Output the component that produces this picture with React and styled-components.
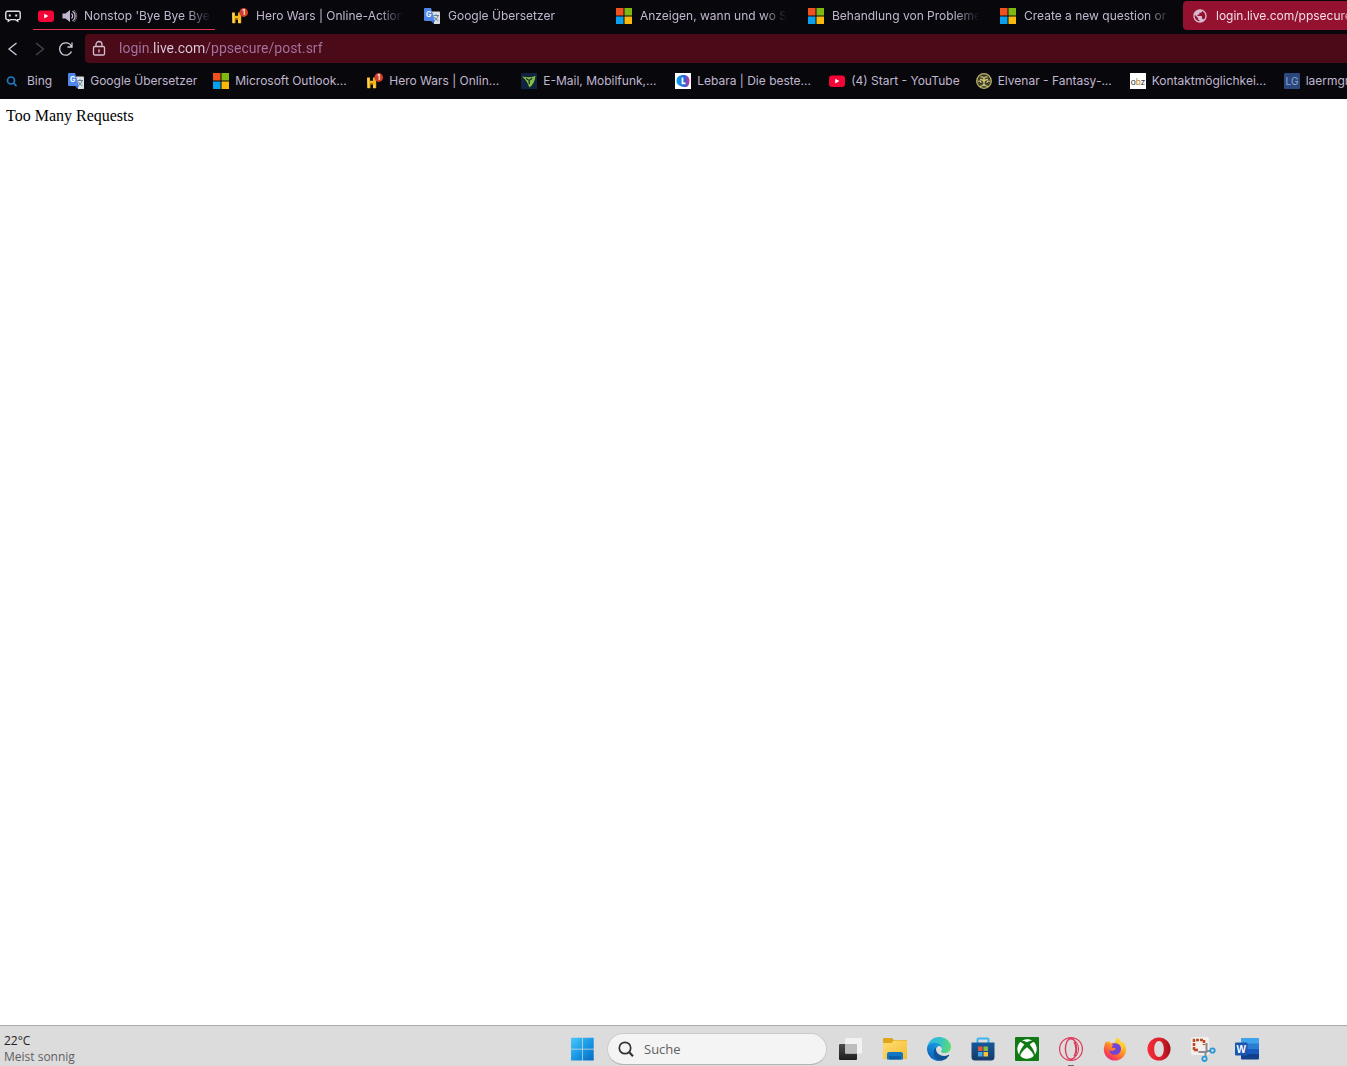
import React from 'react';
import styled, { createGlobalStyle, css } from 'styled-components';
import { MdPublic } from 'react-icons/md';
import { FaXbox } from 'react-icons/fa';

const GlobalStyle = createGlobalStyle`
  * {
    box-sizing: border-box;
  }

  body {
    margin: 0;
    background: #fff;
  }
`;

const Screen = styled.div`
  display: flex;
  flex-direction: column;
  min-height: 100vh;
  overflow: hidden;
`;

const Browser = styled.header`
  background: #08070c;
  color: #c0b7cf;
  font-family: Inter, 'Liberation Sans', sans-serif;
  font-size: 12px;
  overflow: hidden;
`;

const IconButton = styled.button`
  display: flex;
  flex: none;
  align-items: center;
  justify-content: center;
  width: 26px;
  height: 29px;
  padding: 0;
  border: 0;
  background: none;
  color: ${props => props.$dim ? '#4a4650' : '#d3cbdc'};
`;

const TabRow = styled.nav`
  display: flex;
  gap: 8px;
  height: 34px;
  padding: 1px 0 4px;
`;

const Tab = styled.button`
  display: flex;
  flex: none;
  align-items: center;
  gap: 8px;
  width: 184px;
  height: 29px;
  padding: 0 4px 0 9px;
  border: 0;
  border-radius: 4px;
  background: ${props => props.$active ? '#94112f' : 'none'};
  color: ${props => props.$active ? '#f1dfe9' : 'inherit'};
  font: inherit;
  line-height: 16px;
  text-align: left;

  ${props => props.$playing && css`
    width: 182px;
    margin-left: -1px;
    padding-left: 5px;
    border-radius: 0;
    box-shadow: inset 0 -1px #e23350;
  `}
`;

const TabTitle = styled.span`
  flex: 1;
  overflow: hidden;
  white-space: nowrap;
  mask-image: linear-gradient(to left, transparent, #000 24px);
`;

const AddressRow = styled.div`
  display: flex;
  height: 29px;
`;

const AddressBar = styled.label`
  display: flex;
  flex: 1;
  align-items: center;
  gap: 12px;
  margin-left: 7px;
  padding: 0 0 1px 6px;
  border-radius: 4px 0 0 4px;
  background: #4b0a17;
  color: #d3bfd0;
`;

// the host name is brighter than the rest of the url
const AddressInput = styled.input`
  flex: 1;
  min-width: 0;
  height: 20px;
  padding: 0;
  border: 0;
  outline: 0;
  background: linear-gradient(to right, #a374a0 33px, #dccbe0 33px, #dccbe0 86px, #a374a0 86px);
  background-clip: text;
  color: transparent;
  font: 14px/20px Roboto, sans-serif;
`;

const BookmarkRow = styled.nav`
  display: flex;
  align-items: center;
  gap: 16px;
  height: 36px;
  padding-left: 5px;
`;

const Bookmark = styled.a`
  display: flex;
  flex: none;
  align-items: center;
  gap: 6px;
  width: ${props => props.$long ? '138px' : 'auto'};
  color: inherit;
  line-height: 18px;
  text-decoration: none;
  white-space: nowrap;
`;

const Page = styled.main`
  flex: 1;
  padding: 8px 6px;
  color: #000;
  font: 16px/18px 'Liberation Serif', serif;
`;

const Taskbar = styled.footer`
  display: flex;
  align-items: center;
  padding: 7px 78px 1px 4px;
  border-top: 1px solid #aaa;
  background: #dcdcdc;
  font-family: 'Open Sans', 'Noto Sans', sans-serif;
`;

const Weather = styled.div`
  flex: 1;
  color: #606060;
  font-size: 12px;
  line-height: 16px;
`;

const Temperature = styled.div`
  color: #222;
`;

const TaskButton = styled.button`
  position: relative;
  display: flex;
  flex: none;
  align-items: center;
  justify-content: center;
  width: 44px;
  height: 32px;
  padding: 0;
  border: 0;
  background: none;
`;

const RunningMark = styled.span`
  position: absolute;
  bottom: -1px;
  left: 19px;
  width: 6px;
  height: 1px;
  background: #666;
`;

const SearchBox = styled.label`
  display: flex;
  flex: none;
  align-items: center;
  gap: 10px;
  width: 220px;
  height: 32px;
  margin: 0 2px 0 3px;
  padding-left: 10px;
  border: 1px solid #cbcbcb;
  border-bottom-color: #b4b4b4;
  border-radius: 16px;
  background: #f4f4f4;
`;

const SearchInput = styled.input`
  flex: 1;
  min-width: 0;
  padding: 0;
  border: 0;
  outline: 0;
  background: none;
  font: 13px/18px 'Open Sans', 'Noto Sans', sans-serif;

  &::placeholder {
    color: #606060;
    opacity: 1;
  }
`;

const Icon = styled.svg`
  display: block;
  flex: none;
  width: ${props => props.$size || 16}px;
  height: ${props => props.$size || 16}px;
  overflow: visible;
`;

const YouTubeIcon = () => (
  <Icon viewBox="0 0 16 16">
    <rect y="2.5" width="16" height="11.5" rx="3" fill="#f50537" />
    <path d="M6.2 5.8v4.6l4.2-2.3z" fill="#fff" />
  </Icon>
);

const HeroIcon = () => (
  <Icon viewBox="0 0 16 16">
    <path d="M0 4.500h3v3.300h3V4.500h3.200v10.800H6v-3.300H3.400v3.300H.5z" fill="#f2b91c" />
    <path d="M.5 5v10h1.200V5zM6.500 12v3h1.200v-3z" fill="#ffe060" />
    <path d="M3 10.300h3V12H3z" fill="#9c5a0c" />
    <circle cx="11.700" cy="4.500" r="4.400" fill="#cf3d2b" />
    <text x="11.700" y="7.200" fontSize="7" fontWeight="bold" textAnchor="middle" fill="#ffe9df">1</text>
  </Icon>
);

const TranslateIcon = () => (
  <Icon viewBox="0 0 16 16">
    <path d="M6 3.500h9.200a.8.8 0 0 1 .8.8v10.900a.8.8 0 0 1-.8.8H10z" fill="#d9dfe2" />
    <path d="M9.500 7.500h5.500M12 6.300v1.200M14 7.500c-.5 2.500-2 4-3.500 5M10.500 9c.8 1.600 2.200 3 4 3.800" fill="none" stroke="#66818d" strokeWidth="1" />
    <path d="M7 13h3.800L9 15.500z" fill="#2f5fc0" />
    <path d="M1 0h6l4 13H1a1 1 0 0 1-1-1V1a1 1 0 0 1 1-1z" fill="#4f86ea" />
    <text x="4.600" y="8.800" fontSize="7" fontWeight="bold" textAnchor="middle" fill="#fff">G</text>
  </Icon>
);

const MicrosoftIcon = () => (
  <Icon viewBox="0 0 16 16">
    <path d="M0 0h7.500v7.500H0z" fill="#f1511b" />
    <path d="M8.500 0H16v7.500H8.500z" fill="#80b812" />
    <path d="M0 8.500h7.500V16H0z" fill="#08a1ec" />
    <path d="M8.500 8.500H16V16H8.500z" fill="#fbb90b" />
  </Icon>
);

const BingIcon = () => (
  <Icon viewBox="0 0 16 16" fill="none" stroke="#1b7fc4" strokeWidth="1.700">
    <circle cx="6" cy="7.500" r="3.500" />
    <path d="M8.500 10l3 3.200" />
  </Icon>
);

const MailIcon = () => (
  <Icon viewBox="0 0 16 16">
    <path d="M0 0h16v16H0z" fill="#10243f" />
    <path d="M1 3.500c4.500 1.200 9.500 1 13.500-.8C14 8 12 12 8.300 14.500 7 10 4.500 6 1 3.500z" fill="#86bd3b" />
    <path d="M5 5.600l3.200 1.800 3-2.200M8.100 7.400l.2 3.600" stroke="#10243f" strokeWidth="1.200" fill="none" />
  </Icon>
);

const LebaraIcon = () => (
  <Icon viewBox="0 0 16 16">
    <defs>
      <linearGradient id="lebara">
        <stop offset="0" stopColor="#06a5e2" />
        <stop offset=".6" stopColor="#2465da" />
        <stop offset="1" stopColor="#d92d9b" />
      </linearGradient>
    </defs>
    <path d="M0 0h16v16H0z" fill="#fff" />
    <path d="M1.500 8C1.500 4 4.500 2 8.500 2s6 2.500 6 6-1.500 5.500-3 6C6 14 1.500 12 1.500 8z" fill="url(#lebara)" />
    <path d="M7.500 4.500v5.800h3" fill="none" stroke="#fff" strokeWidth="1.800" />
  </Icon>
);

const TreeIcon = () => (
  <Icon viewBox="0 0 16 16">
    <circle cx="8" cy="8" r="7.300" fill="#3c4229" stroke="#bfb16c" strokeWidth="1.300" />
    <path d="M8 5v8M4 6.500c2 0 4 .5 4 3.500 0-3 2-3.500 4-3.500M4.500 4C7 3.500 8 5 8 7c0-2 1-3.500 3.500-3M8 11c-1 2-2 2.500-4 2.500M8 11c1 2 2 2.500 4 2.500M2 8.500c2-1 3 0 3 1.500M14 8.500c-2-1-3 0-3 1.500" fill="none" stroke="#cabd75" strokeWidth="1.300" />
  </Icon>
);

const ObzIcon = () => (
  <Icon viewBox="0 0 16 16">
    <path d="M0 0h16v16H0z" fill="#fff" />
    <text x="8" y="11.500" fontSize="9" textAnchor="middle" fontFamily="Liberation Sans" fill="#333">
      o<tspan fill="#b9812c">b</tspan>z
    </text>
  </Icon>
);

const LgIcon = () => (
  <Icon viewBox="0 0 16 16">
    <rect width="16" height="16" rx="1" fill="#2c477c" />
    <text x="8" y="11.500" fontSize="10" textAnchor="middle" fill="#8ba9d4">LG</text>
  </Icon>
);

const SpeakerIcon = () => (
  <Icon viewBox="0 0 14 14" $size={14}>
    <path d="M.5 4.500h3L8 1v12L3.500 9.500h-3z" fill="#c0b7cf" />
    <path d="M9.500 4.500c1.400 1.500 1.400 3.500 0 5M10.500 2c3.500 2.500 3.500 7.500 0 10" fill="none" stroke="#c0b7cf" strokeWidth="1.300" />
    <path d="M12 1c3.500 3.500 3.500 8.500 0 12" fill="none" stroke="#77717f" strokeWidth="1" />
  </Icon>
);

const WorkspaceIcon = () => (
  <Icon viewBox="0 0 16 16" fill="none" stroke="#e4deea" strokeWidth="1.400">
    <path d="M2.500 3.200h11a1.700 1.700 0 0 1 1.700 1.700v5a1.700 1.700 0 0 1-1.700 1.700h-.8v1.600L10.500 11.600h-5l-2.200 1.600v-1.600h-.8a1.700 1.700 0 0 1-1.700-1.700v-5a1.700 1.700 0 0 1 1.700-1.700z" />
    <path d="M3.800 7.500h2M10.200 7.500h2" strokeWidth="2" />
  </Icon>
);

const BackIcon = () => (
  <Icon viewBox="0 0 16 16" fill="none" stroke="currentColor" strokeWidth="1.300">
    <path d="M11.500 2L4 8l7.500 6" />
  </Icon>
);

const ForwardIcon = () => (
  <Icon viewBox="0 0 16 16" fill="none" stroke="currentColor" strokeWidth="1.300">
    <path d="M5 2l7.500 6L5 14" />
  </Icon>
);

const ReloadIcon = () => (
  <Icon viewBox="0 0 16 16" fill="none" stroke="currentColor" strokeWidth="1.300">
    <path d="M14.500 5.500A6.200 6.200 0 1 0 14.500 10.500M15 1.500v4.500H10.500" />
  </Icon>
);

const LockIcon = () => (
  <Icon viewBox="0 0 16 16" fill="none" stroke="currentColor" strokeWidth="1.300">
    <rect x="2.500" y="6.500" width="11" height="8.500" rx="1.300" />
    <path d="M5 6.500v-2a3 3 0 0 1 6 0v2M8 9.300v3.200" />
  </Icon>
);

const StartIcon = () => (
  <Icon viewBox="0 0 24 24" $size={24}>
    <defs>
      <linearGradient id="start" x1="0" y1="0" x2="24" y2="24" gradientUnits="userSpaceOnUse">
        <stop offset="0" stopColor="#4fcdfb" />
        <stop offset=".5" stopColor="#1b9be6" />
        <stop offset="1" stopColor="#0569c4" />
      </linearGradient>
    </defs>
    <path d="M1 .7h11v11H1zM12.700.7h11v11h-11zM1 12.500h11v11H1zM12.700 12.500h11v11h-11z" fill="url(#start)" />
  </Icon>
);

const TaskViewIcon = () => (
  <Icon viewBox="0 0 24 24" $size={24}>
    <defs>
      <linearGradient id="taskview" x1="0" y1="0" x2="0" y2="1">
        <stop offset="0" stopColor="#4c4c4c" />
        <stop offset="1" stopColor="#1c1c1c" />
      </linearGradient>
    </defs>
    <rect x="0" y="7" width="18" height="16" rx="1" fill="url(#taskview)" />
    <rect x="6" y="1" width="17" height="15.500" rx="1" fill="#f2f2f2" />
    <path d="M6 7h12v9.500H6z" fill="#bdbdbd" />
  </Icon>
);

const FolderIcon = () => (
  <Icon viewBox="0 0 24 24" $size={24}>
    <defs>
      <linearGradient id="folder" x1="0" y1="0" x2="1" y2="1">
        <stop offset="0" stopColor="#ffdd75" />
        <stop offset="1" stopColor="#f5bd2e" />
      </linearGradient>
    </defs>
    <path d="M0 2a1 1 0 0 1 1-1h8l2 2h12a1 1 0 0 1 1 1v5H0z" fill="#dfa51b" />
    <path d="M0 6h8.500l2-2.500H23a1 1 0 0 1 1 1V21a1 1 0 0 1-1 1H1a1 1 0 0 1-1-1z" fill="url(#folder)" />
    <path d="M4 22.500V17a2 2 0 0 1 2-2h12a2 2 0 0 1 2 2v5.500z" fill="#1177c4" />
    <path d="M6 19h12v3.500H6z" fill="#0b5ea5" />
  </Icon>
);

const EdgeIcon = () => (
  <Icon viewBox="4.600 4.900 256 256" $size={24}>
    <defs>
      <linearGradient id="edgeA" x1="63" y1="178" x2="241" y2="178" gradientUnits="userSpaceOnUse">
        <stop offset="0" stopColor="#0c59a4" />
        <stop offset="1" stopColor="#114a8b" />
      </linearGradient>
      <linearGradient id="edgeB" x1="157" y1="90" x2="45" y2="222" gradientUnits="userSpaceOnUse">
        <stop offset="0" stopColor="#1b9de2" />
        <stop offset=".6" stopColor="#1380d1" />
        <stop offset="1" stopColor="#0d67b9" />
      </linearGradient>
      <linearGradient id="edgeC" x1="20" y1="60" x2="255" y2="110" gradientUnits="userSpaceOnUse">
        <stop offset="0" stopColor="#31b4e4" />
        <stop offset=".5" stopColor="#35c4c3" />
        <stop offset="1" stopColor="#5bdc70" />
      </linearGradient>
    </defs>
    <path d="M235.680 195.460a93.730 93.730 0 0 1-10.540 4.710 101.870 101.870 0 0 1-35.900 6.460c-47.320 0-88.540-32.550-88.540-74.320A31.480 31.480 0 0 1 117.130 105c-42.800 1.800-53.800 46.400-53.800 72.530 0 73.880 68.090 81.370 82.760 81.370 7.910 0 19.840-2.300 27-4.560l1.310-.44a128.340 128.340 0 0 0 66.600-52.800 4 4 0 0 0-5.320-5.640z" fill="url(#edgeA)" />
    <path d="M110.340 246.340A79.200 79.200 0 0 1 87.600 225a80.720 80.720 0 0 1 29.530-120c3.120-1.470 8.450-4.130 15.540-4a32.350 32.350 0 0 1 25.690 13 31.880 31.880 0 0 1 6.360 18.660c0-.21 24.460-79.600-80-79.600-43.900 0-80 41.660-80 78.210a130.150 130.150 0 0 0 12.110 56 128 128 0 0 0 156.380 67.110 75.550 75.550 0 0 1-62.780-8z" fill="url(#edgeB)" />
    <path d="M156.940 153.780c-.81 1.050-3.300 2.500-3.300 5.660 0 2.610 1.700 5.120 4.720 7.230 14.380 10 41.490 8.680 41.560 8.680a59.560 59.560 0 0 0 30.270-8.350 61.380 61.380 0 0 0 30.430-52.880c.26-22.410-8-37.310-11.340-43.910C228.090 28.760 182.350 4.920 132.610 4.920a128 128 0 0 0-128 126.200c.48-36.540 36.800-66.050 80-66.050 3.500 0 23.460.34 42 10.070 16.340 8.580 24.900 18.940 30.850 29.210 6.180 10.670 7.280 24.150 7.280 29.520s-2.740 13.330-7.800 19.910z" fill="url(#edgeC)" />
  </Icon>
);

const StoreIcon = () => (
  <Icon viewBox="0 0 24 24" $size={24}>
    <defs>
      <linearGradient id="store" x1="0" y1="0" x2="0" y2="1">
        <stop offset="0" stopColor="#145a9c" />
        <stop offset="1" stopColor="#183a68" />
      </linearGradient>
    </defs>
    <path d="M6.500 6V2.700A1.200 1.200 0 0 1 7.700 1.500h8.600a1.200 1.200 0 0 1 1.200 1.200V6" fill="none" stroke="#3ab5f0" strokeWidth="2" />
    <path d="M.5 5.500h23V20a3.500 3.500 0 0 1-3.500 3.500H4A3.500 3.500 0 0 1 .5 20z" fill="url(#store)" />
    <path d="M7 9.500h4.500V14H7z" fill="#e8563a" />
    <path d="M12.500 9.500H17V14h-4.500z" fill="#83b944" />
    <path d="M7 15h4.500v4.500H7z" fill="#38a9e8" />
    <path d="M12.500 15H17v4.500h-4.500z" fill="#f6c33c" />
  </Icon>
);

const XboxTile = styled.span`
  display: flex;
  align-items: center;
  justify-content: center;
  width: 24px;
  height: 24px;
  border-radius: 1px;
  background: #117a15;
  color: #fff;
  font-size: 20px;
`;

const OperaGxIcon = () => (
  <Icon viewBox="0 0 24 24" $size={24} fill="none" stroke="#df3a5c">
    <circle cx="12" cy="12" r="11.400" strokeWidth="1.200" />
    <ellipse cx="12" cy="12" rx="5.600" ry="10.600" strokeWidth="1.400" />
    <path d="M9 2.500c3-2 10.500 1 10.500 9.500S12 23.500 9 21.500" strokeWidth="1" />
    <path d="M15 5c2.500 4 2.500 10 0 14" strokeWidth="1.200" />
  </Icon>
);

const FirefoxIcon = () => (
  <Icon viewBox="0 0 24 24" $size={24}>
    <defs>
      <linearGradient id="firefox" x1=".8" y1=".1" x2=".2" y2="1">
        <stop offset="0" stopColor="#ffe141" />
        <stop offset=".4" stopColor="#ff9a26" />
        <stop offset=".75" stopColor="#fb4a45" />
        <stop offset="1" stopColor="#e0219a" />
      </linearGradient>
    </defs>
    <path d="M14.500.5c2 1.200 3 3 3.500 4.200.8.200 1.200.8 1.500 1.300l.5-1.500c2 2 3.200 5 3.200 8A11.200 11.200 0 1 1 1.500 8.500C1.800 6.500 2.600 5 3.500 4l.8 2 1.700-2.300 1.500 2.600c2-.8 3.500-.5 4.500-.3C12 3.500 13 1.500 14.500.5z" fill="url(#firefox)" />
    <path d="M12 6.200c4 0 6 3 6 5.900a5.800 5.800 0 0 1-6 5.700c-3.500 0-5.600-2.300-5.600-4.900 1.600 1.400 3 1.400 4.100.6 1-.8 2.200-.8 2.200-1.700 0-1-2.200-1-3.700-1.100-.6-.7-.2-1.800 1.500-2.700-1-.7-2-.8-2.500-.6C9 6.500 10.500 6.200 12 6.200z" fill="#7143d8" />
    <path d="M13.500 5.500C18 7 19.500 10 18.500 14c2-2.500 1.500-6-.5-8-1.500-.8-3-1-4.500-.5z" fill="#ffd03a" />
  </Icon>
);

const OperaIcon = () => (
  <Icon viewBox="0 0 24 24" $size={24}>
    <defs>
      <linearGradient id="opera">
        <stop offset="0" stopColor="#f52b38" />
        <stop offset=".6" stopColor="#d9202c" />
        <stop offset="1" stopColor="#a20f18" />
      </linearGradient>
    </defs>
    <path fillRule="evenodd" d="M12 .5a11.500 11.500 0 1 1 0 23 11.500 11.500 0 0 1 0-23zM12 4C9.200 4 7.200 7.200 7.200 12s2 8 4.800 8 4.800-3.200 4.800-8-2-8-4.800-8z" fill="url(#opera)" />
  </Icon>
);

const SnipIcon = () => (
  <Icon viewBox="0 0 24 24" $size={24} fill="none">
    <rect x="0" y="0" width="18" height="18" rx="2" fill="#f2efed" />
    <path d="M3 13V3h10v5" stroke="#bd4b27" strokeWidth="2.600" strokeDasharray="3 1" />
    <path d="M3 13h4" stroke="#bd4b27" strokeWidth="2.600" />
    <path d="M15.500 6v9h-8M15.500 14h4M14.500 14v6" stroke="#898b8e" strokeWidth="2" />
    <circle cx="21.500" cy="13.500" r="2.200" stroke="#2998d8" strokeWidth="1.800" />
    <circle cx="13.500" cy="21.800" r="2.200" stroke="#2998d8" strokeWidth="1.800" />
  </Icon>
);

const WordIcon = () => (
  <Icon viewBox="0 0 24 24" $size={24}>
    <path d="M6 1h17a1 1 0 0 1 1 1v5H6z" fill="#41a2ec" />
    <path d="M6 6.500h18V12H6z" fill="#2b7dd4" />
    <path d="M6 12h18v5H6z" fill="#185abd" />
    <path d="M6 17h18v4.500a1 1 0 0 1-1 1H7a1 1 0 0 1-1-1z" fill="#123f8c" />
    <rect y="5.500" width="12.500" height="13" rx="1" fill="#1b55ac" />
    <text x="6.200" y="15.800" fontSize="10" fontWeight="bold" textAnchor="middle" fill="#fff">W</text>
  </Icon>
);

const MagnifierIcon = () => (
  <Icon viewBox="0 0 16 16" fill="none" stroke="#333" strokeWidth="1.700">
    <circle cx="7" cy="7" r="5.700" />
    <path d="M11 11l4 4.200" strokeWidth="2.200" />
  </Icon>
);

const tabs = [
  { title: "Nonstop 'Bye Bye Bye", icon: <YouTubeIcon />, playing: true },
  { title: 'Hero Wars | Online-Action', icon: <HeroIcon /> },
  { title: 'Google Übersetzer', icon: <TranslateIcon /> },
  { title: 'Anzeigen, wann und wo S', icon: <MicrosoftIcon /> },
  { title: 'Behandlung von Probleme', icon: <MicrosoftIcon /> },
  { title: 'Create a new question or', icon: <MicrosoftIcon /> },
  { title: 'login.live.com/ppsecure', icon: <MdPublic size={16} color="#d9b9cf" />, active: true },
];

const bookmarks = [
  { title: 'Bing', icon: <BingIcon /> },
  { title: 'Google Übersetzer', icon: <TranslateIcon /> },
  { title: 'Microsoft Outlook...', icon: <MicrosoftIcon />, long: true },
  { title: 'Hero Wars | Onlin...', icon: <HeroIcon />, long: true },
  { title: 'E-Mail, Mobilfunk,...', icon: <MailIcon />, long: true },
  { title: 'Lebara | Die beste...', icon: <LebaraIcon />, long: true },
  { title: '(4) Start - YouTube', icon: <YouTubeIcon /> },
  { title: 'Elvenar - Fantasy-...', icon: <TreeIcon />, long: true },
  { title: 'Kontaktmöglichkei...', icon: <ObzIcon />, long: true },
  { title: 'laermgr', icon: <LgIcon /> },
];

const apps = [
  { name: 'Task View', icon: <TaskViewIcon /> },
  { name: 'Explorer', icon: <FolderIcon /> },
  { name: 'Edge', icon: <EdgeIcon /> },
  { name: 'Store', icon: <StoreIcon /> },
  { name: 'Xbox', icon: <XboxTile><FaXbox /></XboxTile> },
  { name: 'Opera GX', icon: <OperaGxIcon />, running: true },
  { name: 'Firefox', icon: <FirefoxIcon /> },
  { name: 'Opera', icon: <OperaIcon /> },
  { name: 'Snipping Tool', icon: <SnipIcon /> },
  { name: 'Word', icon: <WordIcon /> },
];

class App extends React.Component {
  constructor(props) {
    super(props);

    this.state = {
      url: 'login.live.com/ppsecure/post.srf',
      searchTerm: ''
    }
  }

  render() {
    return (
      <Screen>
        <GlobalStyle />
        <Browser>
          <TabRow>
            <IconButton aria-label="Workspaces"><WorkspaceIcon /></IconButton>
            {tabs.map(tab => (
              <Tab key={tab.title} $active={tab.active} $playing={tab.playing}>
                {tab.icon}
                {tab.playing && <SpeakerIcon />}
                <TabTitle>{tab.title}</TabTitle>
              </Tab>
            ))}
          </TabRow>
          <AddressRow>
            <IconButton aria-label="Back"><BackIcon /></IconButton>
            <IconButton aria-label="Forward" $dim><ForwardIcon /></IconButton>
            <IconButton aria-label="Reload"><ReloadIcon /></IconButton>
            <AddressBar>
              <LockIcon />
              <AddressInput
                aria-label="Address"
                value={this.state.url}
                onChange={(e) => this.setState({ url: e.target.value })}
              />
            </AddressBar>
          </AddressRow>
          <BookmarkRow>
            {bookmarks.map(item => (
              <Bookmark key={item.title} href="#" $long={item.long}>
                {item.icon}
                {item.title}
              </Bookmark>
            ))}
          </BookmarkRow>
        </Browser>
        <Page>Too Many Requests</Page>
        <Taskbar>
          <Weather>
            <Temperature>22°C</Temperature>
            Meist sonnig
          </Weather>
          <TaskButton aria-label="Start"><StartIcon /></TaskButton>
          <SearchBox>
            <MagnifierIcon />
            <SearchInput
              type="text"
              aria-label="Suche"
              placeholder="Suche"
              value={this.state.searchTerm}
              onChange={(e) => this.setState({ searchTerm: e.target.value })}
            />
          </SearchBox>
          {apps.map(app => (
            <TaskButton key={app.name} aria-label={app.name}>
              {app.icon}
              {app.running && <RunningMark />}
            </TaskButton>
          ))}
        </Taskbar>
      </Screen>
    );
  }
}

export default App;
